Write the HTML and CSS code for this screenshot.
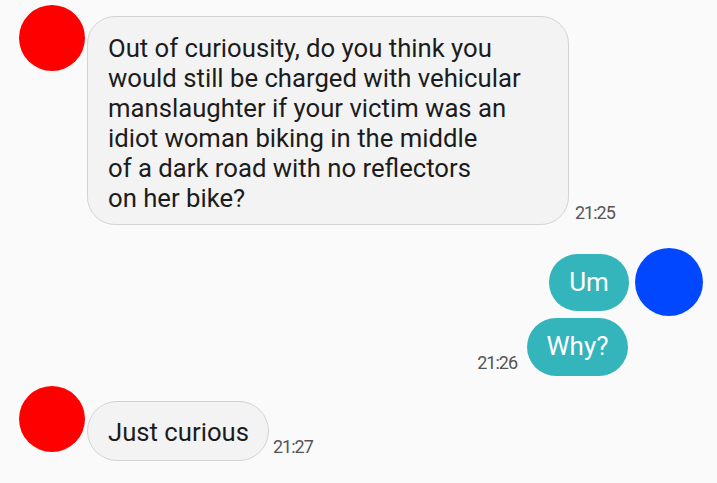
FILE: index.html
```html
<!DOCTYPE html>
<html>
<head>
<meta charset="utf-8">
<link rel="stylesheet" href="styles.css">
</head>
<body>
<div class="chat">
  <div class="row in first">
    <div class="avatar red"></div>
    <div class="bubble long">Out of curiousity, do you think you<br>would still be charged with vehicular<br>manslaughter if your victim was an<br>idiot woman biking in the middle<br>of a dark road with no reflectors<br>on her bike?</div>
    <div class="time t1">21:25</div>
  </div>
  <div class="row out um">
    <div class="pill">Um</div>
    <div class="avatar blue"></div>
  </div>
  <div class="row out why">
    <div class="time t2">21:26</div>
    <div class="pill">Why?</div>
  </div>
  <div class="row in last">
    <div class="avatar red"></div>
    <div class="bubble short">Just curious</div>
    <div class="time t3">21:27</div>
  </div>
</div>
</body>
</html>
```
FILE: styles.css
```css
html, body {
  margin: 0;
  padding: 0;
  background: #fafafa;
}
body {
  font-family: Roboto, "Noto Sans", sans-serif;
  color: #1c1c1c;
  width: 717px;
  height: 483px;
  overflow: hidden;
}
.chat {
  display: flex;
  flex-direction: column;
}
.row {
  display: flex;
}
.row.in {
  padding-left: 19px;
  align-items: flex-start;
}
.row.out {
  justify-content: flex-end;
  padding-right: 14px;
}
.row.first { margin-top: 5px; }
.row.um { margin-top: 23px; align-items: center; }
.row.why { margin-top: 2px; padding-right: 89px; align-items: flex-end; }
.row.last { margin-top: 10px; }

.avatar {
  border-radius: 50%;
  flex: none;
}
.avatar.red {
  width: 66px;
  height: 66px;
  background: #fe0000;
}
.avatar.blue {
  width: 68px;
  height: 68px;
  background: #0047ff;
  margin-left: 6px;
}
.bubble {
  background: #f3f3f3;
  border: 1px solid #d3d3d3;
  box-sizing: border-box;
  font-size: 25.7px;
  line-height: 30px;
  margin-left: 2px;
  white-space: nowrap;
}
.bubble.long {
  width: 482px;
  height: 209px;
  margin-top: 11px;
  border-radius: 28px;
  padding: 16px 20px 13px 20px;
}
.bubble.short {
  width: 182px;
  height: 60px;
  margin-top: 15px;
  border-radius: 30px;
  padding: 15px 20px;
}
.pill {
  background: #34b4bb;
  color: #fff;
  font-size: 26px;
  line-height: 30px;
  height: 57px;
  box-sizing: border-box;
  padding: 13px 0 14px;
  border-radius: 29px;
  text-align: center;
}
.um .pill { width: 80px; }
.why .pill { width: 101px; height: 58px; }
.time {
  font-size: 18px;
  letter-spacing: -1px;
  line-height: 20px;
  color: #555;
  align-self: flex-end;
}
.t1 { margin-left: 6px; margin-bottom: 2px; }
.t2 { margin-right: 10px; margin-bottom: 3px; }
.t3 { margin-left: 4px; margin-bottom: 4px; }
```
